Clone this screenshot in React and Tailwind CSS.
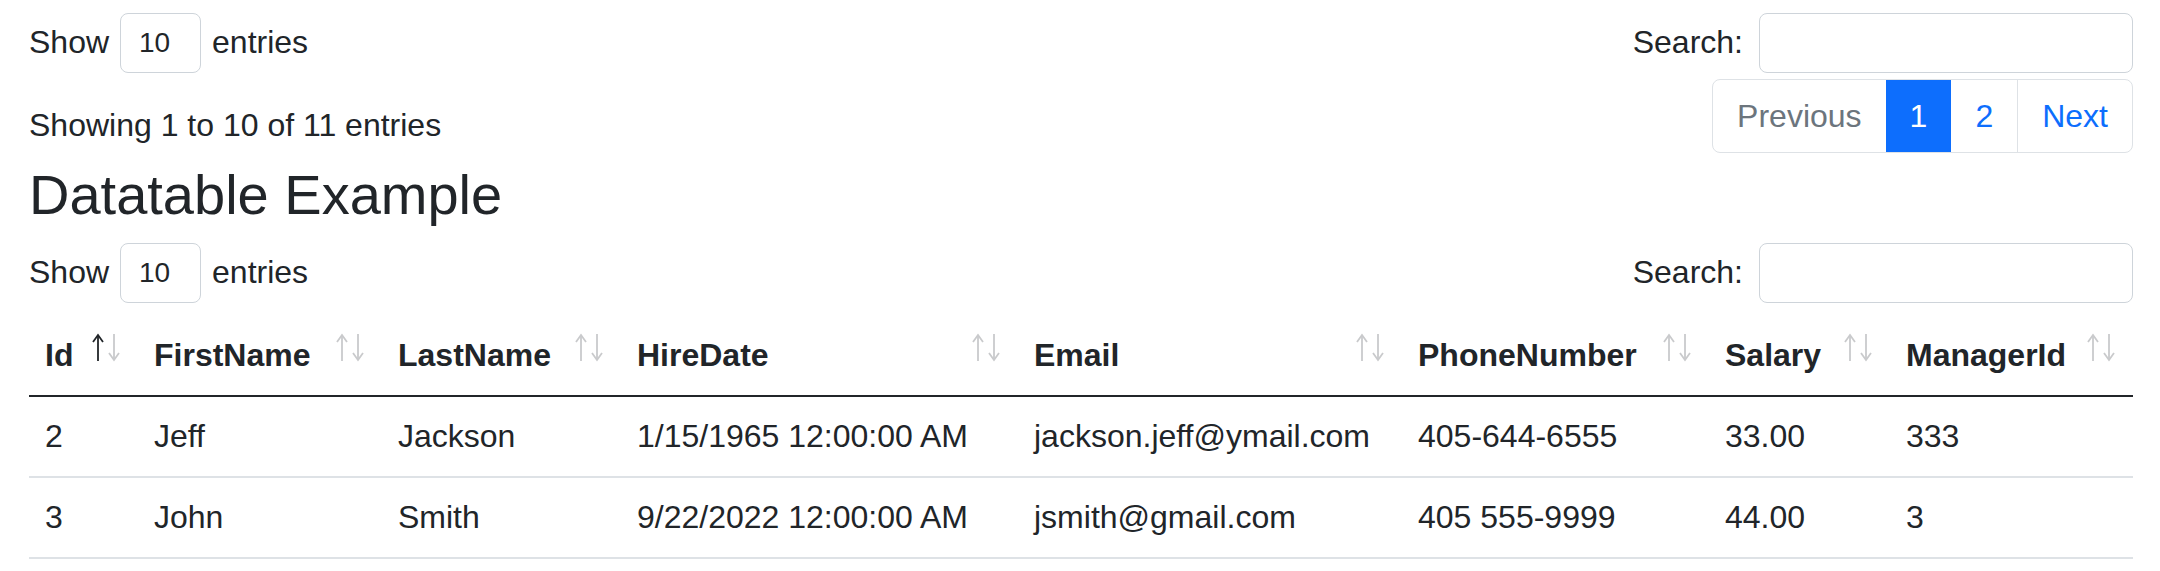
import React from 'react';

const columns = [
    { label: 'Id', width: 'w-[109px]', active: true },
    { label: 'FirstName', width: 'w-[244px]' },
    { label: 'LastName', width: 'w-[239px]' },
    { label: 'HireDate', width: 'w-[397px]' },
    { label: 'Email', width: 'w-[384px]' },
    { label: 'PhoneNumber', width: 'w-[307px]' },
    { label: 'Salary', width: 'w-[181px]' },
    { label: 'ManagerId', width: 'w-[243px]' },
];

const rows = [
    ['2', 'Jeff', 'Jackson', '1/15/1965 12:00:00 AM', 'jackson.jeff@ymail.com', '405-644-6555', '33.00', '333'],
    ['3', 'John', 'Smith', '9/22/2022 12:00:00 AM', 'jsmith@gmail.com', '405 555-9999', '44.00', '3'],
];

const SortArrow = ({ down, color }) => (
    <svg width="12" height="29" viewBox="0 0 12 29" fill="none" stroke={color} strokeWidth="1.8">
        {down ? (
            <>
                <line x1="6" y1="1" x2="6" y2="27" />
                <polyline points="1,20 6,27 11,20" />
            </>
        ) : (
            <>
                <line x1="6" y1="2" x2="6" y2="28" />
                <polyline points="1,9 6,2 11,9" />
            </>
        )}
    </svg>
);

const LengthAndSearch = () => (
    <div className="flex items-center justify-between h-[60px]">
        <div className="flex items-center">
            <span className="-mt-[2px]">Show</span>
            <div className="mx-[11px] w-[81px] h-[60px] border border-[#ced4da] rounded-[8px] flex items-center pl-[18px] text-[28px]">
                10
            </div>
            <span className="-mt-[2px]">entries</span>
        </div>
        <div className="flex items-center">
            <span className="-mt-[2px]">Search:</span>
            <input
                type="text"
                className="ml-[16px] w-[374px] h-[60px] border border-[#ced4da] rounded-[8px] px-4 outline-none"
            />
        </div>
    </div>
);

const App = () => {
    return (
        <div className="min-h-screen bg-white pl-[29px] pr-[27px] pt-[13px] font-['Liberation_Sans',Arial,sans-serif] text-[32px] leading-[1.5] text-[#212529]">
            <LengthAndSearch />

            {/* info + pagination */}
            <div className="flex items-start justify-between mt-[6px]">
                <div className="pt-[22px]">Showing 1 to 10 of 11 entries</div>
                <div className="flex border border-[#dee2e6] rounded-[8px] overflow-hidden">
                    <span className="px-[24px] py-[12px] text-[#6c757d]">Previous</span>
                    <span className="px-[24px] py-[12px] bg-[#0d6efd] text-white">1</span>
                    <span className="px-[24px] py-[12px] text-[#0d6efd]">2</span>
                    <span className="px-[24px] py-[12px] text-[#0d6efd] border-l border-[#dee2e6]">Next</span>
                </div>
            </div>

            <h3 className="mt-[8px] mb-[15px] text-[56px] leading-[1.2] font-normal">Datatable Example</h3>

            <LengthAndSearch />

            <table className="mt-[12px] w-full table-fixed border-collapse">
                <thead>
                    <tr>
                        {columns.map((col) => (
                            <th
                                key={col.label}
                                className={`${col.width} pl-4 pr-[18px] py-4 text-left font-bold border-b-2 border-[#212529]`}
                            >
                                <div className="flex items-start justify-between">
                                    <span>{col.label}</span>
                                    <span className="flex gap-[4px] mt-[2px]">
                                        <SortArrow color={col.active ? '#212529' : '#c9cacc'} />
                                        <SortArrow down color="#c9cacc" />
                                    </span>
                                </div>
                            </th>
                        ))}
                    </tr>
                </thead>
                <tbody>
                    {rows.map((row) => (
                        <tr key={row[0]}>
                            {row.map((cell, i) => (
                                <td key={i} className="px-4 py-4 border-b-2 border-[#dee2e6] whitespace-nowrap leading-[47px]">
                                    {cell}
                                </td>
                            ))}
                        </tr>
                    ))}
                </tbody>
            </table>
        </div>
    );
};

export default App;
